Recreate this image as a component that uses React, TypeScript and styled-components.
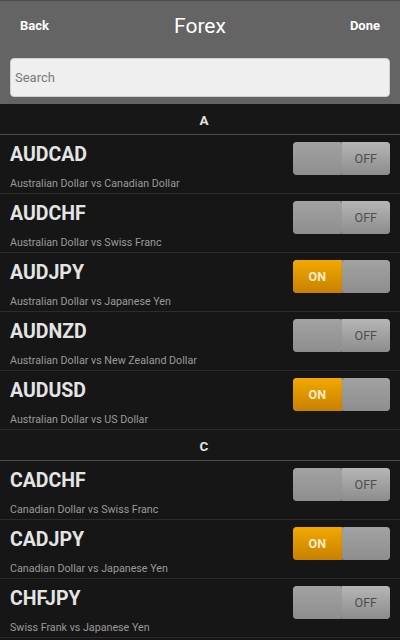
import React, { useState } from "react";
import styled, { createGlobalStyle } from "styled-components";

const Global = createGlobalStyle`
  html, body { margin: 0; padding: 0; background: #161616; }
  body { font-family: Roboto, "Liberation Sans", Arial, sans-serif; -webkit-font-smoothing: antialiased; }
  * { box-sizing: border-box; }
`;

const Page = styled.div`
  width: 400px;
  height: 640px;
  overflow: hidden;
  background: #161616;
  display: flex;
  flex-direction: column;
`;

const Header = styled.header`
  background: #646464;
  border-top: 1px solid #4a4a4a;
  padding: 0 10px 7px;
  display: flex;
  flex-direction: column;
`;

const TitleBar = styled.div`
  height: 51px;
  display: grid;
  grid-template-columns: 1fr auto 1fr;
  align-items: center;
  padding: 0 10px 0 10px;
`;

const NavButton = styled.button<{ $align: "left" | "right" }>`
  background: none;
  border: 0;
  padding: 0;
  color: #ffffff;
  font-family: Roboto, "Liberation Sans", Arial, sans-serif;
  font-weight: 700;
  font-size: 13px;
  justify-self: ${(p) => (p.$align === "left" ? "start" : "end")};
  margin-top: -2px;
`;

const Title = styled.h1`
  margin: 0;
  color: #ffffff;
  font-weight: 400;
  font-size: 21px;
  margin-top: -1px;
`;

const SearchBox = styled.input`
  margin-top: 6px;
  height: 39px;
  width: 100%;
  border-radius: 4px;
  border: 1px solid #cfcfcf;
  background: #efefef;
  padding: 0 4px;
  font-family: Roboto, "Liberation Sans", Arial, sans-serif;
  font-size: 13px;
  color: #333;
  outline: none;
  &::placeholder { color: #7a7a7a; }
`;

const SectionHeader = styled.div`
  height: 31px;
  background: #171717;
  border-bottom: 1px solid #4c4c4c;
  color: #e2e2e2;
  font-weight: 700;
  font-size: 13.5px;
  display: flex;
  align-items: center;
  justify-content: center;
  padding: 2px 0 0 8px;
`;

const Row = styled.div`
  height: 59px;
  border-bottom: 1px solid #2c2c2c;
  background: #161616;
  display: flex;
  justify-content: space-between;
  align-items: flex-start;
  padding: 0 10px;
`;

const Texts = styled.div`
  display: flex;
  flex-direction: column;
  padding-top: 8px;
`;

const Symbol = styled.div`
  color: #e4e4e4;
  font-weight: 700;
  font-size: 19.5px;
  line-height: 24px;
`;

const Desc = styled.div`
  margin-top: 10px;
  color: #9a9a9a;
  font-size: 10.7px;
  line-height: 14px;
`;

const Toggle = styled.button`
  margin-top: 7px;
  width: 97px;
  height: 33px;
  padding: 0;
  border: 0;
  border-radius: 4px;
  overflow: hidden;
  display: grid;
  grid-template-columns: 1fr 1fr;
  background: #777;
  cursor: pointer;
`;

const Knob = styled.span`
  background: linear-gradient(180deg, #a2a2a2 0%, #8e8e8e 100%);
  border-radius: 3px;
  box-shadow: 0 0 1px rgba(0,0,0,0.4);
`;

const OffLabel = styled.span`
  background: linear-gradient(180deg, #b6b6b6 0%, #8c8c8c 100%);
  color: #4e4e4e;
  font-family: Roboto, "Liberation Sans", Arial, sans-serif;
  font-size: 12.5px;
  display: flex;
  align-items: center;
  justify-content: center;
`;

const OnLabel = styled.span`
  background: linear-gradient(180deg, #f3a800 0%, #c88100 100%);
  color: #fbeccc;
  font-family: Roboto, "Liberation Sans", Arial, sans-serif;
  font-weight: 700;
  font-size: 12.5px;
  display: flex;
  align-items: center;
  justify-content: center;
`;

type Pair = { sym: string; desc: string; on: boolean };

const sections: { letter: string; items: Pair[] }[] = [
  {
    letter: "A",
    items: [
      { sym: "AUDCAD", desc: "Australian Dollar vs Canadian Dollar", on: false },
      { sym: "AUDCHF", desc: "Australian Dollar vs Swiss Franc", on: false },
      { sym: "AUDJPY", desc: "Australian Dollar vs Japanese Yen", on: true },
      { sym: "AUDNZD", desc: "Australian Dollar vs New Zealand Dollar", on: false },
      { sym: "AUDUSD", desc: "Australian Dollar vs US Dollar", on: true },
    ],
  },
  {
    letter: "C",
    items: [
      { sym: "CADCHF", desc: "Canadian Dollar vs Swiss Franc", on: false },
      { sym: "CADJPY", desc: "Canadian Dollar vs Japanese Yen", on: true },
      { sym: "CHFJPY", desc: "Swiss Frank vs Japanese Yen", on: false },
    ],
  },
];

function Switch({ on, onClick }: { on: boolean; onClick: () => void }) {
  return (
    <Toggle onClick={onClick}>
      {on ? (
        <>
          <OnLabel>ON</OnLabel>
          <Knob />
        </>
      ) : (
        <>
          <Knob />
          <OffLabel>OFF</OffLabel>
        </>
      )}
    </Toggle>
  );
}

export default function App() {
  const [state, setState] = useState<Record<string, boolean>>(() => {
    const s: Record<string, boolean> = {};
    sections.forEach((sec) => sec.items.forEach((i) => (s[i.sym] = i.on)));
    return s;
  });
  return (
    <Page>
      <Global />
      <Header>
        <TitleBar>
          <NavButton $align="left">Back</NavButton>
          <Title>Forex</Title>
          <NavButton $align="right">Done</NavButton>
        </TitleBar>
        <SearchBox placeholder="Search" />
      </Header>
      {sections.map((sec) => (
        <React.Fragment key={sec.letter}>
          <SectionHeader>{sec.letter}</SectionHeader>
          {sec.items.map((it) => (
            <Row key={it.sym}>
              <Texts>
                <Symbol>{it.sym}</Symbol>
                <Desc>{it.desc}</Desc>
              </Texts>
              <Switch
                on={state[it.sym]}
                onClick={() => setState((s) => ({ ...s, [it.sym]: !s[it.sym] }))}
              />
            </Row>
          ))}
        </React.Fragment>
      ))}
    </Page>
  );
}
